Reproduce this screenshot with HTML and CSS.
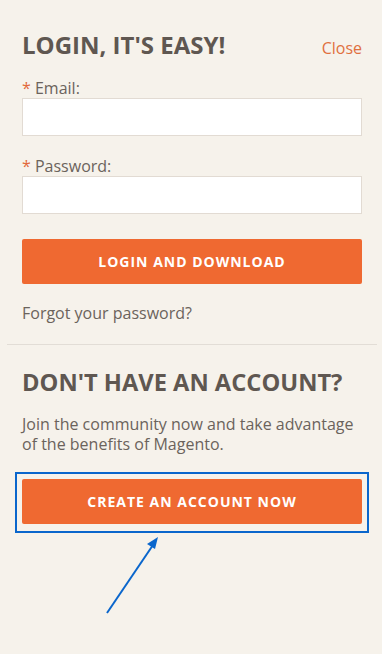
FILE: index.html
```html
<!DOCTYPE html>
<html>
<head>
<meta charset="utf-8">
<link rel="stylesheet" href="styles.css">
</head>
<body>
<div class="panel">
  <section class="section login">
    <div class="head">
      <h2 class="title">LOGIN, IT'S EASY!</h2>
      <a class="close">Close</a>
    </div>
    <label class="label"><span class="req">*</span> Email:</label>
    <div class="input"></div>
    <label class="label pw"><span class="req">*</span> Password:</label>
    <div class="input"></div>
    <div class="btn login-btn">LOGIN AND DOWNLOAD</div>
    <a class="forgot">Forgot your password?</a>
  </section>
  <hr class="sep">
  <section class="section signup">
    <h2 class="title">DON'T HAVE AN ACCOUNT?</h2>
    <p class="text">Join the community now and take advantage of the benefits of Magento.</p>
    <div class="highlight">
      <div class="btn create-btn">CREATE AN ACCOUNT NOW</div>
      <svg class="arrow" width="70" height="90" viewBox="0 0 70 90">
        <line x1="12" y1="81" x2="58" y2="13" stroke="#0a66cc" stroke-width="2"/>
        <polygon points="63,5 52,12 60,17" fill="#0a66cc"/>
      </svg>
    </div>
  </section>
</div>
</body>
</html>
```
FILE: styles.css
```css
html, body {
  margin: 0;
  padding: 0;
  background: #f6f2eb;
}
body {
  font-family: "Open Sans", sans-serif;
  color: #6b635c;
  width: 382px;
  height: 654px;
  overflow: hidden;
}
.panel {
  padding: 0 5px 0 7px;
}
.section {
  padding: 0 15px;
}
.head {
  display: flex;
  justify-content: space-between;
  align-items: baseline;
  padding-top: 30px;
}
.title {
  margin: 0;
  font-size: 24px;
  font-weight: 700;
  line-height: 30px;
  color: #5f5751;
}
.signup .title {
  margin-top: 22px;
  font-size: 23.7px;
}
.close {
  font-size: 16px;
  color: #e0703f;
}
.label {
  display: block;
  margin-top: 19px;
  font-size: 16px;
  line-height: 18px;
}
.label.pw {
  margin-top: 21px;
}
.req {
  color: #e2683a;
}
.input {
  height: 36px;
  background: #fff;
  border: 1px solid #e2dbd3;
  margin-top: 1px;
}
.btn {
  background: #ef6931;
  color: #fff;
  font-weight: 700;
  font-size: 14px;
  letter-spacing: 1px;
  text-align: center;
  border-radius: 2px;
}
.login-btn {
  margin-top: 25px;
  height: 45px;
  line-height: 45px;
}
.forgot {
  display: block;
  margin-top: 19px;
  font-size: 16px;
  line-height: 20px;
}
.sep {
  border: 0;
  border-top: 1px solid #e2ddd6;
  margin: 21px 0 0;
}
.text {
  margin: 17px 0 0;
  font-size: 16px;
  line-height: 20px;
}
.highlight {
  position: relative;
  margin: 18px -7px 0;
  border: 2px solid #0a66cc;
  padding: 5px 5px 7px;
}
.create-btn {
  height: 45px;
  line-height: 45px;
}
.arrow {
  position: absolute;
  left: 78px;
  top: 58px;
}
```
